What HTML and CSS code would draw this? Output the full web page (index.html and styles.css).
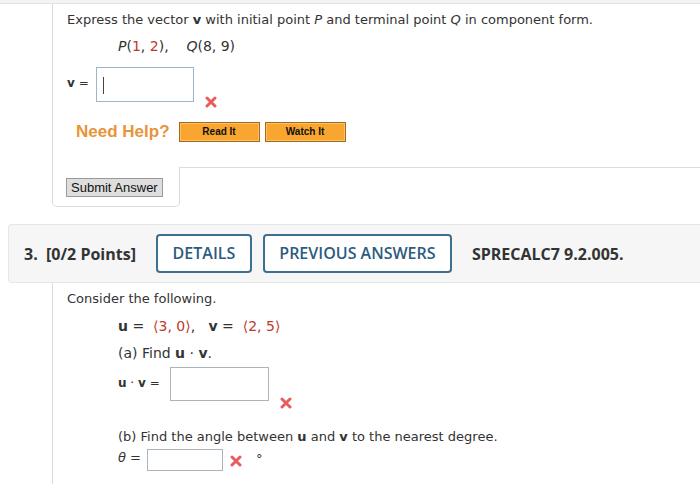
FILE: index.html
```html
<!DOCTYPE html>
<html>
<head>
<meta charset="utf-8">
<link rel="stylesheet" href="styles.css">
</head>
<body>
<div class="topstrip"></div>
<div class="q2body">
  <p class="prompt">Express the vector <b>v</b> with initial point <i>P</i> and terminal point <i>Q</i> in component form.</p>
  <p class="math pts"><i>P</i>(<span class="red">1</span>, <span class="red">2</span>),&nbsp;&nbsp;&nbsp; <i>Q</i>(8, 9)</p>
  <div class="ansrow v-row">
    <span class="lbl"><b>v</b> =</span>
    <span class="inbox big"><span class="caret"></span></span>
    <svg class="xmark x1" width="12" height="12" viewBox="0 0 12 12"><path d="M2 2L10 10M10 2L2 10" stroke="#e85c5c" stroke-width="3" stroke-linecap="round"/></svg>
  </div>
  <div class="help">
    <span class="needhelp">Need Help?</span>
    <span class="hbtn">Read It</span>
    <span class="hbtn">Watch It</span>
  </div>
</div>
<div class="submitrow">
  <div class="submitbox"><span class="submit">Submit Answer</span></div>
  <div class="filler"></div>
</div>
<div class="q3head">
  <span class="qnum">3.&nbsp; [0/2 Points]</span>
  <span class="obtn details">DETAILS</span>
  <span class="obtn prev">PREVIOUS ANSWERS</span>
  <span class="code">SPRECALC7 9.2.005.</span>
</div>
<div class="q3body">
  <p class="prompt">Consider the following.</p>
  <p class="math uv"><b>u</b> = &nbsp;<span class="red">⟨3, 0⟩</span>,&nbsp;&nbsp; <b>v</b> = &nbsp;<span class="red">⟨2, 5⟩</span></p>
  <p class="math parta">(a) Find <b>u</b> · <b>v</b>.</p>
  <div class="ansrow uv-row">
    <span class="lbl"><b>u</b> · <b>v</b> =</span>
    <span class="inbox mid"></span>
    <svg class="xmark x2" width="12" height="12" viewBox="0 0 12 12"><path d="M2 2L10 10M10 2L2 10" stroke="#e85c5c" stroke-width="3" stroke-linecap="round"/></svg>
  </div>
  <p class="math partb">(b) Find the angle between <b>u</b> and <b>v</b> to the nearest degree.</p>
  <div class="ansrow th-row">
    <span class="lbl"><i>θ</i> =</span>
    <span class="inbox small"></span>
    <svg class="xmark x3" width="12" height="12" viewBox="0 0 12 12"><path d="M2 2L10 10M10 2L2 10" stroke="#e85c5c" stroke-width="3" stroke-linecap="round"/></svg>
    <span class="deg">°</span>
  </div>
</div>
</body>
</html>
```
FILE: styles.css
```css
* { box-sizing: border-box; }
body {
  margin: 0;
  background: #fff;
  font-family: "DejaVu Sans", Verdana, sans-serif;
  font-size: 13px;
  color: #333;
  width: 700px;
  height: 484px;
  overflow: hidden;
}
p { margin: 0; }
.red { color: #c0392b; }
.topstrip {
  height: 4px;
  background: #f3f3f3;
  border-bottom: 1px solid #e2e2e2;
}
.q2body {
  margin-left: 52px;
  border-left: 1px solid #dcdcdc;
  padding: 7px 0 0 14px;
  height: 163px;
}
.prompt { line-height: 18px; }
.math { margin-left: 51px; line-height: 18px; font-size: 14px; }
.pts { margin-top: 8px; }
.ansrow { display: flex; align-items: flex-start; }
.v-row { margin-top: 12px; height: 36px; }
.v-row .lbl { margin-top: 9px; font-size: 12px; width: 29px; }
.inbox {
  display: block;
  border: 1px solid #a9b4bd;
  background: #fff;
}
.inbox.big { width: 98px; height: 35px; border-color: #9fb6c8; }
.caret {
  display: block;
  width: 1px;
  height: 17px;
  background: #444;
  margin: 9px 0 0 6px;
}
.xmark { display: block; }
.x1 { margin: 29px 0 0 11px; }
.help {
  display: flex;
  align-items: center;
  margin: 19px 0 0 9px;
  font-family: "Liberation Sans", Arial, sans-serif;
}
.needhelp {
  color: #e8943a;
  font-weight: bold;
  font-size: 17px;
  margin-right: 9px;
}
.hbtn {
  display: block;
  width: 81px;
  height: 20px;
  line-height: 18px;
  text-align: center;
  background: #f8a630;
  border: 1px solid #a36a1c;
  box-shadow: inset 0 0 0 1px #fbc166;
  font-size: 10px;
  font-weight: bold;
  color: #111;
  margin-right: 5px;
}
.submitrow { display: flex; height: 40px; }
.submitbox {
  margin-left: 52px;
  width: 128px;
  border: 1px solid #dcdcdc;
  border-top: none;
  border-radius: 0 0 5px 5px;
  padding: 11px 0 0 13px;
}
.submit {
  display: inline-block;
  font-family: "Liberation Sans", Arial, sans-serif;
  font-size: 13px;
  line-height: 17px;
  padding: 0 4px;
  background: #dedede;
  border: 1px solid #9a9a9a;
  color: #111;
}
.filler {
  flex: 1;
  border-top: 1px solid #dcdcdc;
  margin-left: -1px;
}
.q3head {
  margin: 17px 0 0 8px;
  height: 59px;
  background: #f6f6f6;
  border: 1px solid #e6e6e6;
  border-right: none;
  border-radius: 4px 0 0 4px;
  display: flex;
  align-items: center;
  padding-left: 15px;
  font-family: "Open Sans", sans-serif;
  font-weight: bold;
  font-size: 16px;
  color: #333;
}
.qnum { margin-right: 20px; }
.obtn {
  display: block;
  height: 39px;
  line-height: 35px;
  border: 2px solid #3f6f8f;
  border-radius: 4px;
  color: #2c5b80;
  font-weight: 600;
  font-size: 16px;
  text-align: center;
  background: #fff;
}
.details { width: 96px; margin-right: 11px; }
.prev { width: 189px; margin-right: 20px; }
.code { color: #333; }
.q3body {
  margin-left: 52px;
  border-left: 1px solid #dcdcdc;
  padding: 7px 0 0 14px;
  height: 210px;
}
.uv { margin-top: 9px; }
.parta { margin-top: 9px; }
.uv-row { margin-left: 51px; margin-top: 5px; height: 37px; }
.uv-row .lbl { margin-top: 9px; font-size: 12px; width: 52px; }
.inbox.mid { width: 99px; height: 34px; }
.x2 { margin: 30px 0 0 11px; }
.partb { margin-top: 24px; font-size: 13px; }
.th-row { margin-left: 51px; margin-top: 3px; height: 24px; }
.th-row .lbl { margin-top: 1px; width: 29px; }
.inbox.small { width: 76px; height: 22px; }
.x3 { margin: 6px 0 0 7px; }
.deg { margin: 2px 0 0 14px; }
```
